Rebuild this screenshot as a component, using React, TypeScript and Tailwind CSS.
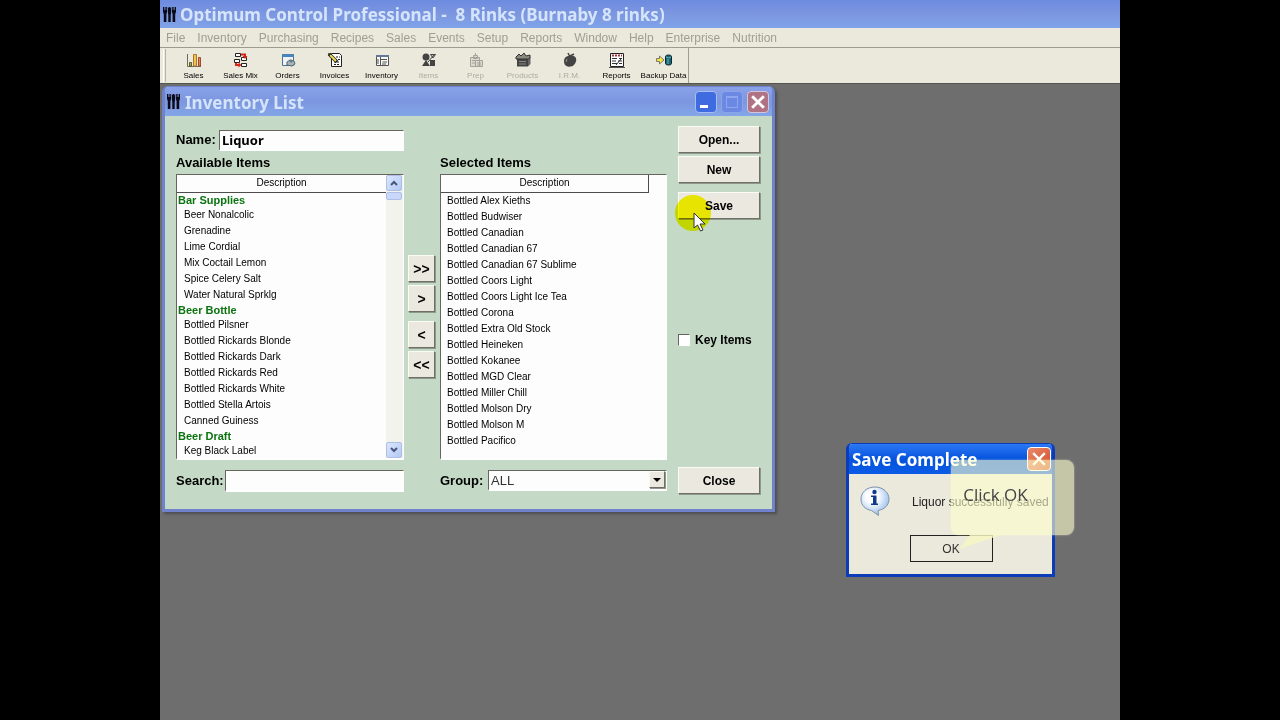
import { useState, type ReactNode } from 'react';

type Row = { label: string; group?: boolean };

const MENUS = [
  'File', 'Inventory', 'Purchasing', 'Recipes', 'Sales', 'Events',
  'Setup', 'Reports', 'Window', 'Help', 'Enterprise', 'Nutrition',
];

const AVAILABLE: Row[] = [
  { label: 'Bar Supplies', group: true },
  { label: 'Beer Nonalcolic' },
  { label: 'Grenadine' },
  { label: 'Lime Cordial' },
  { label: 'Mix Coctail Lemon' },
  { label: 'Spice Celery Salt' },
  { label: 'Water Natural Sprklg' },
  { label: 'Beer Bottle', group: true },
  { label: 'Bottled Pilsner' },
  { label: 'Bottled Rickards Blonde' },
  { label: 'Bottled Rickards Dark' },
  { label: 'Bottled Rickards Red' },
  { label: 'Bottled Rickards White' },
  { label: 'Bottled Stella Artois' },
  { label: 'Canned Guiness' },
  { label: 'Beer Draft', group: true },
  { label: 'Keg Black Label' },
];

const SELECTED = [
  'Bottled Alex Kieths',
  'Bottled Budwiser',
  'Bottled Canadian',
  'Bottled Canadian 67',
  'Bottled Canadian 67 Sublime',
  'Bottled Coors Light',
  'Bottled Coors Light Ice Tea',
  'Bottled Corona',
  'Bottled Extra Old Stock',
  'Bottled Heineken',
  'Bottled Kokanee',
  'Bottled MGD Clear',
  'Bottled Miller Chill',
  'Bottled Molson Dry',
  'Bottled Molson M',
  'Bottled Pacifico',
];

const ICONS: Record<string, ReactNode> = {
  Sales: (
    <>
      <path d="M1.5 2v12.5H15" fill="none" stroke="#6b6b5c" />
      <path d="M3.500 10.500h2V14h-2z" fill="#a9b56a" stroke="#55602c" />
      <path d="M7.500 2.500h3V14h-3z" fill="#f0c54a" stroke="#b0762a" />
      <path d="M12.500 5.500h2V14h-2z" fill="#dd8a55" stroke="#a5492b" />
    </>
  ),
  'Sales Mix': (
    <>
      <path d="M2.500 1.500h5v3h-5zM8.500 5.500h5v3h-5zM1.500 7.500h5v3h-5zM8.500 11.500h5v3h-5z" fill="#fff" stroke="#222" />
      <path d="M8 2.500h4v2M6.500 13H3v-2" fill="none" stroke="#d8231b" strokeWidth="2" />
      <path d="M9.500 4h5L12 7zM5.500 10.500l3 2.500-3 2.500z" fill="#d8231b" />
    </>
  ),
  Orders: (
    <>
      <path d="M2.500 2.500h11v11h-11z" fill="#eef3f6" stroke="#4d6f92" />
      <path d="M2 2h12v3H2z" fill="#4b82b8" />
      <path d="M7 10l3-2 4 1 1 3-3 2-5-1z" fill="#a8b4bc" stroke="#556673" />
      <circle cx="11" cy="9" r="1.500" fill="#6a7883" />
    </>
  ),
  Invoices: (
    <>
      <path d="M4.500 1.500h8l2 2v11h-10z" fill="#fff" stroke="#222" />
      <path d="M9 5h4M8 7.500h5M7 10h6M7 12.500h5" stroke="#222" strokeDasharray="2 1" />
      <path d="M2 2l8 8" stroke="#222" strokeWidth="3.500" />
      <path d="M3 3l6 6" stroke="#f3de48" strokeWidth="2" />
      <path d="M1 1l3 1-2 2z" fill="#222" />
    </>
  ),
  Inventory: (
    <>
      <path d="M2.500 3.500h12v10h-12z" fill="#f7f7f4" stroke="#555" />
      <path d="M2 3h13v2H2z" fill="#64789a" />
      <path d="M6.500 5v8M6.500 7.500H13M8.500 10H13M8 12h4M4 7v5" stroke="#555" />
    </>
  ),
  Items: (
    <>
      <circle cx="5" cy="5" r="3.500" fill="#444" />
      <path d="M9.500 2.500h5L12 6z" fill="#c9c9bf" stroke="#444" />
      <path d="M5 8l4 6H1z" fill="#444" />
      <path d="M9 8h5v6H9z" fill="#444" />
      <path d="M7 10l6-7" stroke="#444" />
    </>
  ),
  Prep: (
    <g fill="#dcdad0" stroke="#a5a398">
      <path d="M2.500 5.500h9v9h-9zM5.500 3.500h4v3h-4zM7.500 8.500h7v6h-7z" />
      <path d="M7.500 1v3M4 8.500h3M4 11h3M9 11h4M9 13h4" />
    </g>
  ),
  Products: (
    <>
      <path d="M2 7h11v7.500H2z" fill="#444" />
      <path d="M13 7l2.500-2v7L13 14.500z" fill="#666" />
      <path d="M1 5l3-3 2 2 3-3 2 3 4-1v3l-2 1H1z" fill="#8a8a80" stroke="#333" />
      <path d="M4 9.500h7M4 12h7" stroke="#8a8a80" />
    </>
  ),
  'I.R.M.': (
    <>
      <path d="M8 4c5-1 7 2 6 5.500S10 15 8 14.500C5 15.500 2 13 2 9.500S4 3.500 8 4z" fill="#444" />
      <path d="M8 5L6 1M8 4l4-2" stroke="#444" strokeWidth="1.500" />
      <path d="M5 7l-1 3" stroke="#999" />
    </>
  ),
  Reports: (
    <>
      <path d="M1.500 1.500h13v13h-13z" fill="#fff" stroke="#222" />
      <path d="M3 3.500h10" stroke="#9b3535" strokeWidth="2" strokeDasharray="2 1" />
      <path d="M3 6.500h5M10 6.500h3M3 9h4M9 9h4M3 11.500h5M10 11.500h3M7 13l5-6" stroke="#333" />
      <path d="M0 15.500h16" stroke="#555" />
    </>
  ),
  'Backup Data': (
    <>
      <path d="M.5 6.500h3V4l4.500 4-4.500 4V9.500h-3z" fill="#f8e63a" stroke="#777" />
      <path d="M9.500 4.500c0-2 6-2 6 0v7c0 2-6 2-6 0z" fill="#15666f" stroke="#123" />
      <path d="M10 5c1 1 4 1 5 0M12 7v5" fill="none" stroke="#6db9c0" />
    </>
  ),
};

const TOOLS = [
  { label: 'Sales' },
  { label: 'Sales Mix' },
  { label: 'Orders' },
  { label: 'Invoices' },
  { label: 'Inventory' },
  { label: 'Items', disabled: true },
  { label: 'Prep', disabled: true },
  { label: 'Products', disabled: true },
  { label: 'I.R.M.', disabled: true },
  { label: 'Reports' },
  { label: 'Backup Data' },
];

const RAISED =
  'bg-[#ebe9df] border border-t-[#fbfbf6] border-l-[#fbfbf6] border-r-[#6f6f66] border-b-[#6f6f66] shadow-[1px_1px_0_#8f988c]';
const SUNKEN = 'bg-[#fdfdfd] border border-b-2 border-t-[#66665f] border-l-[#66665f] border-r-white border-b-white';

function AppIcon() {
  return (
    <svg viewBox="0 0 13 15" className="h-[15px] w-[13px] shrink-0" fill="#0c0c18" aria-hidden="true">
      <path d="M0 0h1v3h.6V0h1v3h.6V0h1v5l-.8 2v8H.8V7L0 5z" />
      <path d="M5 1.500c.5-2 2.500-2 3 0v5L7.700 8v7H5.300V8L5 6.500z" />
      <path d="M8.800 0h1v3h.6V0h1v3h.6V0h1v5l-.8 2v8H9.600V7l-.8-2z" />
    </svg>
  );
}

function PushButton({ children, className = '' }: { children: ReactNode; className?: string }) {
  return (
    <button type="button" className={`${RAISED} h-[27px] w-full text-[12px] font-bold leading-none ${className}`}>
      {children}
    </button>
  );
}

function ScrollButton({ up = false }: { up?: boolean }) {
  return (
    <button
      type="button"
      aria-label={up ? 'Scroll up' : 'Scroll down'}
      className="flex h-4 w-4 shrink-0 items-center justify-center rounded-xs border border-[#aebfe6] bg-gradient-to-br from-[#dbe6fc] to-[#b4c9f5]"
    >
      <svg viewBox="0 0 8 6" className="h-[6px] w-2" fill="none" stroke="#46567e" strokeWidth="2">
        <path d={up ? 'M1 5l3-3 3 3' : 'M1 1l3 3 3-3'} />
      </svg>
    </button>
  );
}

function Toolbar() {
  return (
    <div className="flex h-[37px] items-stretch border-t border-b border-t-[#9d9b8f] border-b-[#55554f] bg-[#ebe9dc]">
      <div className="my-px mr-1 ml-[3px] w-[3px] border-r border-l border-r-[#b5b3a6] border-l-white" />
      <div className="flex border-r border-[#a09e92] pr-px">
        {TOOLS.map(({ label, disabled }) => (
          <button
            key={label}
            type="button"
            disabled={disabled}
            className={`flex w-[47px] flex-col items-center gap-[3px] pt-1 text-[8px] leading-[10px] whitespace-nowrap ${disabled ? 'text-[#aeaca0]' : 'text-black'}`}
          >
            <svg viewBox="0 0 16 16" className="h-4 w-4 shrink-0" aria-hidden="true">
              {ICONS[label]}
            </svg>
            {label}
          </button>
        ))}
      </div>
    </div>
  );
}

function InventoryWindow() {
  const [name, setName] = useState('Liquor');
  const [search, setSearch] = useState('');
  const [keyItems, setKeyItems] = useState(false);

  return (
    <section className="absolute top-0.5 left-0.5 w-[613px] rounded-t-md border-[3px] border-t border-[#6f82cb] bg-[#c5dac6] shadow-[2px_2px_3px_#4c4c52]">
      <header className="flex h-[29px] items-center gap-[5px] rounded-t-sm bg-gradient-to-b from-[#8aa2ea] via-[#7b97df] to-[#84a6e8] pr-[3px] pl-0.5">
        <AppIcon />
        <h2 className="flex-1 pt-0.5 font-['Noto_Sans'] text-[17px] font-bold text-[#d6e4fb]">Inventory List</h2>
        <div className="flex gap-1">
          <button type="button" aria-label="Minimize" className="flex h-[22px] w-[22px] items-end rounded-sm border border-[#a9bdf3] bg-[#3f6be0] p-1">
            <span className="h-[3px] w-2 bg-white" />
          </button>
          <button type="button" aria-label="Maximize" disabled className="flex h-[22px] w-[22px] items-center justify-center rounded-sm border border-[#8ca5ea] bg-[#6b89e2]">
            <span className="h-3 w-3 border border-t-2 border-[#8da6ef]" />
          </button>
          <button type="button" aria-label="Close window" className="flex h-[22px] w-[22px] items-center justify-center rounded-sm border border-[#d5c5db] bg-[#b07383]">
            <svg viewBox="0 0 12 12" className="h-[14px] w-[14px]" stroke="#fff" strokeWidth="2.500">
              <path d="M1 1l10 10M11 1L1 11" />
            </svg>
          </button>
        </div>
      </header>

      <div className="flex h-[393px] pt-[10px] pr-3 pl-[11px]">
        {/* Available items */}
        <div className="flex w-[228px] flex-col">
          <div className="flex h-7 items-center">
            <label htmlFor="name" className="w-[43px] text-[13px] font-bold">Name:</label>
            <input
              id="name"
              value={name}
              onChange={(e) => setName(e.target.value)}
              className={`${SUNKEN} h-[21px] min-w-0 flex-1 pl-0.5 font-['Noto_Sans'] text-[13px] font-bold`}
            />
          </div>
          <h3 className="mb-0.5 text-[13px] leading-[18px] font-bold">Available Items</h3>
          <div className={`${SUNKEN} flex h-[286px]`}>
            <table className="h-fit flex-1 text-left text-[10px]">
              <thead>
                <tr>
                  <th className="h-[17px] border-b border-[#4c4c48] text-center leading-4 font-normal">Description</th>
                </tr>
              </thead>
              <tbody>
                {AVAILABLE.map(({ label, group }) => (
                  <tr key={label}>
                    <td className={group ? 'h-[14px] pl-px text-[11px] leading-[14px] font-bold text-[#0b740f]' : 'h-4 pl-[7px] leading-4'}>
                      {label}
                    </td>
                  </tr>
                ))}
              </tbody>
            </table>
            <div className="flex w-[17px] flex-col bg-[#f3f3ee]">
              <ScrollButton up />
              <div className="mt-px h-2 w-4 rounded-xs border border-[#aebfe6] bg-[#c8d7fa]" />
              <div className="flex-1" />
              <ScrollButton />
            </div>
          </div>
          <div className="mt-[10px] flex items-center">
            <label htmlFor="search" className="w-[49px] text-[13px] font-bold">Search:</label>
            <input
              id="search"
              value={search}
              onChange={(e) => setSearch(e.target.value)}
              className={`${SUNKEN} h-[22px] min-w-0 flex-1 text-[13px]`}
            />
          </div>
        </div>

        {/* Move buttons */}
        <div className="mr-[5px] ml-1 flex w-[27px] flex-col gap-[3px] pt-[129px]">
          <PushButton className="text-[14px]">&gt;&gt;</PushButton>
          <PushButton className="text-[14px]">&gt;</PushButton>
          <PushButton className="mt-[6px] text-[14px]">&lt;</PushButton>
          <PushButton className="text-[14px]">&lt;&lt;</PushButton>
        </div>

        {/* Selected items */}
        <div className="flex w-[227px] flex-col pt-7">
          <h3 className="mb-0.5 text-[13px] leading-[18px] font-bold">Selected Items</h3>
          <div className={`${SUNKEN} h-[286px] pr-[17px]`}>
            <table className="w-full text-left text-[10px]">
              <thead>
                <tr>
                  <th className="h-[17px] border-r border-b border-[#4c4c48] text-center leading-4 font-normal">Description</th>
                </tr>
              </thead>
              <tbody>
                {SELECTED.map((label) => (
                  <tr key={label}>
                    <td className="h-4 pl-[6px] leading-4">{label}</td>
                  </tr>
                ))}
              </tbody>
            </table>
          </div>
          <div className="mt-[10px] flex items-center">
            <label htmlFor="group" className="w-12 text-[13px] font-bold">Group:</label>
            <div className="relative flex flex-1">
              <select id="group" className={`${SUNKEN} h-[21px] w-full appearance-none pl-[2px] text-[13px] leading-none text-[#333]`}>
                <option>ALL</option>
              </select>
              <span className={`${RAISED} pointer-events-none absolute top-px right-0.5 flex h-[17px] w-4 items-center justify-center`}>
                <svg viewBox="0 0 8 4" className="h-1 w-2">
                  <path d="M0 0h8L4 4z" />
                </svg>
              </span>
            </div>
          </div>
        </div>

        <div className="ml-[11px] flex flex-1 flex-col gap-[3px]">
          <PushButton>Open...</PushButton>
          <PushButton>New</PushButton>
          <PushButton className="mt-[6px]">Save</PushButton>
          <label className="mt-[109px] flex items-center gap-[5px] text-[12px] font-bold whitespace-nowrap">
            <input
              type="checkbox"
              checked={keyItems}
              onChange={(e) => setKeyItems(e.target.checked)}
              className="h-3 w-3 appearance-none border border-t-[#66665f] border-r-white border-b-white border-l-[#66665f] bg-white checked:bg-[#3f6be0]"
            />
            Key Items
          </label>
          <PushButton className="mt-auto mb-[15px]">Close</PushButton>
        </div>
      </div>
    </section>
  );
}

function SaveDialog() {
  return (
    <section role="dialog" aria-label="Save Complete" className="absolute top-[359px] left-[686px] w-[209px] rounded-t-md border-[3px] border-t border-[#0c3cb8] bg-[#ebe9dc]">
      <header className="flex h-[30px] items-center justify-between rounded-t-sm bg-gradient-to-b from-[#2b78f5] via-[#0553dd] to-[#0b5be6] pr-px pl-[3px]">
        <h2 className="pt-px font-['Noto_Sans'] text-[17px] font-bold whitespace-nowrap text-white">Save Complete</h2>
        <button type="button" aria-label="Close dialog" className="flex h-6 w-6 shrink-0 items-center justify-center rounded-sm border border-white bg-gradient-to-br from-[#e98a6c] to-[#d14a20]">
          <svg viewBox="0 0 12 12" className="h-[14px] w-[14px]" stroke="#fff" strokeWidth="2">
            <path d="M1 1l10 10M11 1L1 11" />
          </svg>
        </button>
      </header>
      <div className="flex items-center gap-[22px] pt-3 pl-[11px]">
        <svg viewBox="0 0 30 30" className="h-[30px] w-[30px] shrink-0" aria-hidden="true">
          <defs>
            <radialGradient id="bubble" cx="0.400" cy="0.350" r="0.700">
              <stop offset="0.300" stopColor="#fff" />
              <stop offset="1" stopColor="#8fb9ea" />
            </radialGradient>
          </defs>
          <path
            d="M15 1C6.500 1 1 6.500 1 13s4.500 10.500 10.500 11.500l7 5-.5-5C24.500 23.500 29 19 29 13S23.500 1 15 1z"
            fill="url(#bubble)"
            stroke="#7f93ad"
          />
          <circle cx="14.500" cy="6" r="2.200" fill="#123a8c" />
          <path d="M11 9.500h5.500v8H18V19h-7v-1.500h2V11h-2z" fill="#123a8c" />
        </svg>
        <p className="pt-0.5 text-[12px] whitespace-nowrap text-[#222]">Liquor successfully saved</p>
      </div>
      <div className="flex justify-center pt-[19px] pb-3 pl-px">
        <button type="button" className="h-[27px] w-[83px] border border-[#222] text-[12px] text-[#333]">OK</button>
      </div>
    </section>
  );
}

function Hint() {
  return (
    <div className="pointer-events-none absolute top-[376px] left-[791px] flex h-[75px] w-[123px] justify-center rounded-lg bg-[#ffffcd]/60 pt-[23px] pr-[34px] shadow-[0_0_2px_#ffffcd99]">
      <span className="font-['Open_Sans'] text-[17px] leading-6 whitespace-nowrap text-[#444]">Click OK</span>
      <svg viewBox="0 0 42 16" className="absolute top-full left-[8px] h-4 w-[42px]" aria-hidden="true">
        <path d="M11 0h31L0 14z" fill="#f6f6c0" fillOpacity="0.800" />
      </svg>
    </div>
  );
}

function ClickHighlight() {
  return (
    <svg viewBox="0 0 36 36" className="pointer-events-none absolute top-[111px] left-[515px] h-9 w-9 mix-blend-multiply" aria-hidden="true">
      <circle cx="18" cy="18" r="18" fill="#fafa00" />
    </svg>
  );
}

function Cursor() {
  return (
    <svg viewBox="0 0 14 20" className="pointer-events-none absolute top-[128px] left-[533px] h-5 w-[14px]" aria-hidden="true">
      <path d="M1 1v15l3.500-3 3 6 2.500-1-3-6h5z" fill="#fff" stroke="#333" />
    </svg>
  );
}

export default function App() {
  return (
    <div className="min-h-screen bg-black font-['Liberation_Sans',sans-serif] text-black">
      <main className="mx-auto flex min-h-screen w-3/4 flex-col overflow-hidden bg-[#6e6e6e]">
        <header className="flex h-7 items-center gap-1 bg-gradient-to-b from-[#6d8be0] via-[#7c97df] to-[#7fa3ea] pl-[3px]">
          <AppIcon />
          <h1 className="pt-px font-['Noto_Sans'] text-[17px] font-bold whitespace-pre text-[#d6e4fb]">
            {'Optimum Control Professional -  8 Rinks (Burnaby 8 rinks)'}
          </h1>
        </header>
        <nav className="flex h-[19px] items-center gap-3 bg-[#ebe9dc] pl-[6px] text-[12px] text-[#a09e92]">
          {MENUS.map((menu) => (
            <button key={menu} type="button">{menu}</button>
          ))}
        </nav>
        <Toolbar />
        <div className="relative flex-1">
          <InventoryWindow />
          <SaveDialog />
          <Hint />
          <ClickHighlight />
          <Cursor />
        </div>
      </main>
    </div>
  );
}
